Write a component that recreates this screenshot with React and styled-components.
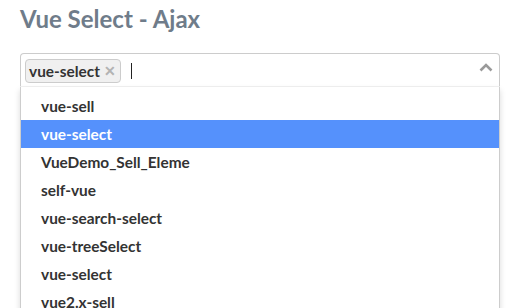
import React from 'react'
import styled, { createGlobalStyle } from 'styled-components'

const GlobalStyle = createGlobalStyle`
    body {
        margin: 0;
        background: #fff;
        font-family: Lato, "Open Sans", sans-serif;
        overflow: hidden;
    }
`;

const options = [
    'vue-sell',
    'vue-select',
    'VueDemo_Sell_Eleme',
    'self-vue',
    'vue-search-select',
    'vue-treeSelect',
    'vue-select',
    'vue2.x-sell',
];

const Page = styled.div`
    padding: 0 15px 0 20px;
    width: 480px;
`;

const Title = styled.h2`
    margin: 0;
    padding-top: 3px;
    font-size: 24px;
    line-height: 32px;
    font-weight: 700;
    color: #6f7c8a;
`;

const Select = styled.div`
    margin-top: 18px;
    position: relative;
`;

const Toggle = styled.div`
    display: flex;
    align-items: center;
    height: 32px;
    border: 1px solid rgba(60, 60, 60, 0.26);
    border-bottom-color: #f2f2f2;
    border-radius: 4px 4px 0 0;
    padding: 0 6px 0 4px;
`;

const Tag = styled.span`
    display: flex;
    align-items: center;
    height: 22px;
    margin-top: 1px;
    padding: 0 4px 0 3px;
    background: #f0f0f0;
    border: 1px solid #ccc;
    border-radius: 4px;
    color: #333;
    font-size: 15.4px;
    font-weight: 700;
`;

const Close = styled.span`
    margin-left: 4px;
    color: #b3b3b3;
    font-size: 14px;
    font-weight: 700;
`;

const Caret = styled.span`
    width: 1px;
    height: 16px;
    margin: 1px 0 0 10px;
    background: #222;
`;

const Arrow = styled.svg`
    margin-left: auto;
    margin-top: -6px;
`;

const Menu = styled.ul`
    list-style: none;
    margin: 0;
    padding: 5px 0 0;
    border: 1px solid rgba(60, 60, 60, 0.26);
    border-top: none;
    box-shadow: 0 3px 6px 0 rgba(0, 0, 0, 0.15);
    height: 260px;
    overflow: hidden;
`;

const Option = styled.li`
    height: 28px;
    line-height: 28px;
    padding: 0 20px;
    font-size: 15.4px;
    font-weight: 700;
    color: ${p => (p.$active ? '#fff' : '#333')};
    background: ${p => (p.$active ? '#5591fc' : 'transparent')};
`;

export default function App() {
    return (
        <Page>
            <GlobalStyle />
            <Title>Vue Select - Ajax</Title>
            <Select>
                <Toggle>
                    <Tag>
                        vue-select
                        <Close>✕</Close>
                    </Tag>
                    <Caret />
                    <Arrow width="14" height="9" viewBox="0 0 14 9">
                        <path d="M1.5 7.5 L7 2 L12.5 7.5" fill="none" stroke="#9a9a9a" strokeWidth="2.6" />
                    </Arrow>
                </Toggle>
                <Menu>
                    {options.map((o, i) => (
                        <Option key={i} $active={i === 1}>{o}</Option>
                    ))}
                </Menu>
            </Select>
        </Page>
    )
}
